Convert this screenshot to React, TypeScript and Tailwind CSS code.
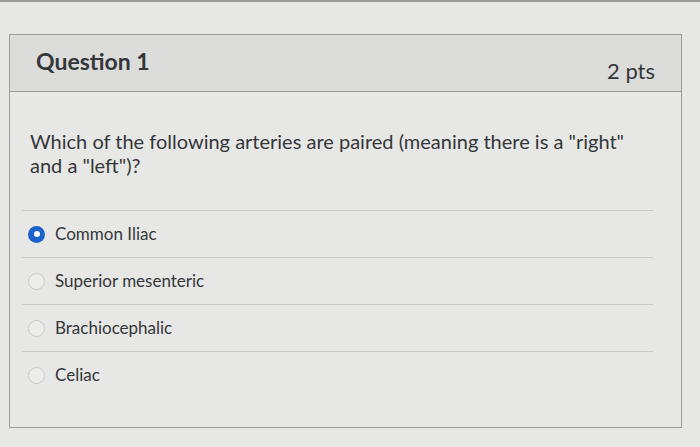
import React from 'react';

const answers = [
  { label: 'Common Iliac', selected: true },
  { label: 'Superior mesenteric', selected: false },
  { label: 'Brachiocephalic', selected: false },
  { label: 'Celiac', selected: false },
];

const Radio = ({ selected }: { selected: boolean }) =>
  selected ? (
    <span className="w-[17px] h-[17px] rounded-full bg-[#1b62cc] flex items-center justify-center shrink-0">
      <span className="w-[6px] h-[6px] rounded-full bg-white" />
    </span>
  ) : (
    <span className="w-[17px] h-[17px] rounded-full border border-[#c9c9c7] bg-[#ececea] shrink-0" />
  );

export default function App() {
  return (
    <div
      className="w-[700px] h-[447px] bg-[#e7e7e5] overflow-hidden border-t-2 border-[#9a9a98] pt-[32px] pl-[9px] pr-[18px]"
      style={{ fontFamily: 'Lato, "Open Sans", sans-serif' }}
    >
      <div className="border border-[#9c9c9a] text-[#34373a] h-[394px]">
        <div className="h-[57px] bg-[#dcdcda] border-b border-[#9c9c9a] flex items-start justify-between pl-[26px] pr-[26px]">
          <h2 className="text-[23px] font-bold mt-[9px]">Question 1</h2>
          <span className="text-[22px] mt-[19px]">2 pts</span>
        </div>
        <div className="pt-[37px] pl-[20px] pr-[20px]">
          <p className="text-[20px] leading-[24px]">
            Which of the following arteries are paired (meaning there is a "right"
            <br />
            and a "left")?
          </p>
          <div className="mt-[33px] ml-[-8px] mr-[8px]">
            {answers.map((a) => (
              <div
                key={a.label}
                className="border-t border-[#c9c9c7] h-[47px] flex items-center gap-[10px] pl-[6px]"
              >
                <Radio selected={a.selected} />
                <span className="text-[17px]">{a.label}</span>
              </div>
            ))}
          </div>
        </div>
      </div>
    </div>
  );
}
